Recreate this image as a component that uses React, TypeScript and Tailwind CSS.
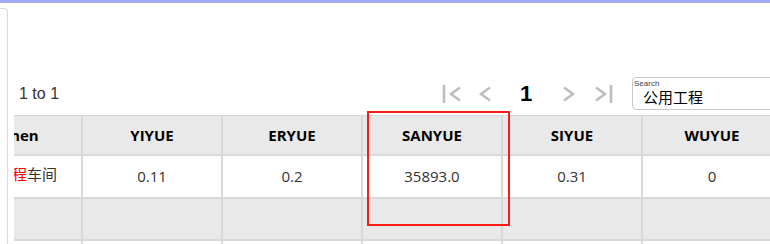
import React from 'react';

const columns = ['Bumen', 'YIYUE', 'ERYUE', 'SANYUE', 'SIYUE', 'WUYUE'];
const values = ['0.11', '0.2', '35893.0', '0.31', '0'];

const Chevron = ({ points, bar }: { points: string; bar?: number }) => (
  <svg width="20" height="20" viewBox="0 0 20 20" className="shrink-0">
    {bar !== undefined && (
      <line x1={bar} y1="1" x2={bar} y2="19" stroke="#bdbdbd" strokeWidth="2.6" />
    )}
    <polyline points={points} fill="none" stroke="#bdbdbd" strokeWidth="2.4" />
  </svg>
);

export default function App() {
  return (
    <div className="relative w-[770px] h-[244px] overflow-hidden bg-white font-['Open_Sans',sans-serif]">
      {/* Top strip */}
      <div className="h-[3px] bg-[#a2a9f5]" />

      <div className="flex h-[241px]">
        {/* Left panel edge */}
        <div className="w-[8px] shrink-0 mt-[5px] border-t border-r border-[#dcdcdc] rounded-tr-[4px]" />

        <div className="flex-1 min-w-0 pl-[6px] pt-[74px] flex flex-col">
          {/* Toolbar */}
          <div className="flex items-center h-[33px]">
            <div className="w-[427px] shrink-0 pl-[5px] text-[16px] text-[#333] font-['Liberation_Sans',sans-serif]">
              1 to 1
            </div>
            <div className="flex items-center w-[191px] shrink-0">
              <Chevron points="19,3.5 10,10 19,16.5" bar={3} />
              <div className="ml-[14px]">
                <Chevron points="15,3.5 6,10 15,16.5" />
              </div>
              <span className="ml-[25px] w-[12px] text-center text-[22px] font-bold text-black leading-none font-['Liberation_Sans',sans-serif]">
                1
              </span>
              <div className="ml-[27px]">
                <Chevron points="5,3.5 14,10 5,16.5" />
              </div>
              <div className="ml-[15px]">
                <Chevron points="2,3.5 11,10 2,16.5" bar={17} />
              </div>
            </div>
            <div className="w-[160px] h-[33px] shrink-0 border border-[#c8c8c8] rounded-[4px] pl-[1px] flex flex-col">
              <span className="text-[8px] leading-[9px] mt-[1px] text-[#444] font-['Liberation_Sans',sans-serif]">Search</span>
              <span className="pl-[9px] text-[15px] leading-[18px] text-black font-['Noto_Sans_CJK_SC',sans-serif]">
                公用工程
              </span>
            </div>
          </div>

          {/* Table */}
          <div className="mt-[5px] overflow-hidden">
            <div className="ml-[-71px] w-[852px] grid grid-cols-[repeat(6,138px)] gap-[2px] bg-[#d9d9d9] pt-[1px]">
              {columns.map((c) => (
                <div key={c} className="h-[38px] bg-[#e9e9e9] flex items-center justify-center text-[15px] font-bold text-black whitespace-nowrap">
                  {c}
                </div>
              ))}
              <div className="h-[41px] bg-white flex items-center justify-center pb-[5px] text-[15px] text-[#333] whitespace-nowrap font-['Noto_Sans_CJK_SC',sans-serif]">
                <span className="text-[#ff0000]">公用工程</span>车间
              </div>
              {values.map((v, i) => (
                <div key={i} className="h-[41px] bg-white flex items-center justify-center text-[15px] text-[#333]">
                  {v}
                </div>
              ))}
              {columns.map((c) => (
                <div key={'e' + c} className="h-[40px] bg-[#e9e9e9]" />
              ))}
              {columns.map((c) => (
                <div key={'w' + c} className="h-[20px] bg-white" />
              ))}
            </div>
          </div>
        </div>
      </div>

      {/* Red annotation box */}
      <div className="absolute left-[367px] top-[111px] w-[143px] h-[115px] border-2 border-[#ff1a1a] pointer-events-none" />
    </div>
  );
}
